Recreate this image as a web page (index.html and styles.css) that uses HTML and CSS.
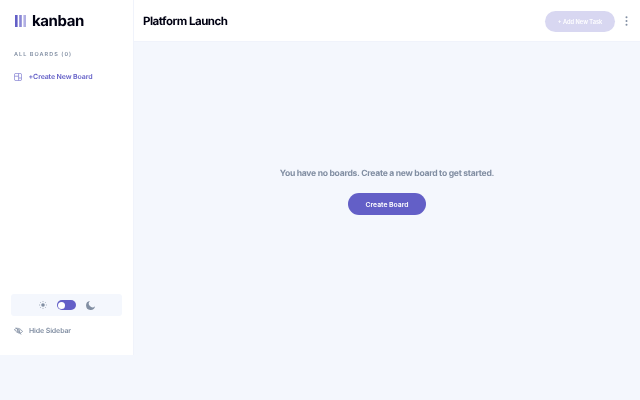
FILE: index.html
```html
<!DOCTYPE html>
<html lang="en">
<head>
<meta charset="utf-8">
<title>Kanban</title>
<link rel="stylesheet" href="styles.css">
</head>
<body>
<div class="app">
  <aside class="sidebar">
    <div class="logo">
      <svg class="logo-mark" width="11" height="12" viewBox="0 0 11 12"><rect x="0" width="2.6" height="12" fill="#635fc7"/><rect x="4.2" width="2.6" height="12" fill="#635fc7" opacity=".75"/><rect x="8.4" width="2.6" height="12" fill="#635fc7" opacity=".5"/></svg>
      <span class="logo-text txt">kanban</span>
    </div>
    <div class="boards-label txt">ALL BOARDS (0)</div>
    <div class="create-link">
      <svg class="nav-icon" width="8" height="8" viewBox="0 0 8 8" fill="none" stroke="#635fc7" stroke-width=".8" opacity=".75"><rect x=".4" y=".4" width="7.2" height="7.2" rx="1.5"/><path d="M.4 3.2H4.6M4.6 .4V7.6M4.6 5H7.6"/></svg>
      <span class="txt">+Create New Board</span>
    </div>
    <div class="sidebar-foot">
      <div class="theme">
        <svg width="8" height="8" viewBox="0 0 9 9" fill="#828fa3"><circle cx="4.5" cy="4.5" r="2"/><path d="M4.5 0V1.2M4.5 7.8V9M0 4.5H1.2M7.8 4.5H9M1.3 1.3L2.2 2.2M6.8 6.8L7.7 7.7M1.3 7.7L2.2 6.8M6.8 2.2L7.7 1.3" stroke="#828fa3" stroke-width=".7"/></svg>
        <div class="toggle"><span class="knob"></span></div>
        <svg width="9" height="9" viewBox="0 0 9 9" fill="#828fa3"><path d="M4 0A4.5 4.5 0 1 0 9 5.2 3.6 3.6 0 0 1 4 0Z"/></svg>
      </div>
      <div class="hide">
        <svg width="9" height="8" viewBox="0 0 9 8" fill="none" stroke="#828fa3" stroke-width=".9"><path d="M.5 2.5C3 .5 6 1 8.5 4.5 6.5 7 3 6.5 .5 2.5Z"/><circle cx="4.5" cy="3.8" r="1.3"/><path d="M2 .5L7 7.5"/></svg>
        <span class="txt">Hide Sidebar</span>
      </div>
    </div>
  </aside>
  <main class="main">
    <header class="topbar">
      <h1 class="title txt">Platform Launch</h1>
      <div class="actions">
        <button class="add-task"><span class="txt">+ Add New Task</span></button>
        <svg width="3" height="10" viewBox="0 0 3 10" fill="#828fa3"><circle cx="1.5" cy="1.2" r="1"/><circle cx="1.5" cy="5" r="1"/><circle cx="1.5" cy="8.8" r="1"/></svg>
      </div>
    </header>
    <section class="empty">
      <p class="empty-text txt">You have no boards. Create a new board to get started.</p>
      <button class="create-board"><span class="txt">Create Board</span></button>
    </section>
  </main>
</div>
</body>
</html>
```
FILE: styles.css
```css
* { box-sizing: border-box; }
html, body { margin: 0; height: 100%; }
body { background: #f4f7fd; font-family: Inter, "Noto Sans", sans-serif; font-weight: 600; overflow: hidden; text-rendering: geometricPrecision; }
.txt { will-change: opacity; }
.app { display: flex; height: 400px; align-items: flex-start; }
.sidebar { width: 134px; height: 355px; background: #fff; border-right: 1px solid #f0f3fb; display: flex; flex-direction: column; flex: none; }
.logo { display: flex; align-items: center; gap: 6px; padding: 8px 0 0 15px; height: 33px; }
.logo-text { font-size: 15px; font-weight: 700; color: #000112; line-height: 24px; letter-spacing: -.4px; }
.boards-label { margin: 17px 0 0 14px; font-size: 5.5px; letter-spacing: 1.05px; line-height: 10px; color: #828fa3; font-weight: 600; }
.create-link { display: flex; align-items: center; gap: 6.5px; margin: 11px 0 0 14px; color: #635fc7; font-size: 7px; line-height: 12px; letter-spacing: -.12px; }
.sidebar-foot { margin-top: auto; padding: 0 11px 19px; }
.theme { height: 22px; background: #f4f7fd; border-radius: 3px; display: flex; align-items: center; justify-content: center; gap: 10px; }
.toggle { width: 19px; height: 10px; border-radius: 5px; background: #635fc7; padding: 1.5px; }
.knob { display: block; width: 7px; height: 7px; border-radius: 50%; background: #fff; }
.hide { display: flex; align-items: center; gap: 6px; margin: 9px 0 0 3px; color: #828fa3; font-size: 7px; font-weight: 600; line-height: 11px; letter-spacing: -.12px; }
.main { flex: 1; min-width: 0; height: 400px; display: flex; flex-direction: column; }
.topbar { height: 42px; background: #fff; border-bottom: 1px solid #f0f3fb; display: flex; align-items: center; justify-content: space-between; padding: 1px 12px 0 9px; }
.title { margin: 0; font-size: 11.5px; font-weight: 700; color: #000112; letter-spacing: -.5px; }
.actions { display: flex; align-items: center; gap: 9px; }
.add-task { width: 70px; height: 21px; border: 0; border-radius: 11px; background: #d8d7f1; color: #fff; font: 600 5.7px Inter, sans-serif; padding: 0; margin-right: 1px; }
.empty { flex: 1; display: flex; flex-direction: column; align-items: center; padding-top: 126px; }
.empty-text { margin: 0; font-size: 8.6px; line-height: 13px; color: #828fa3; font-weight: 700; letter-spacing: -.28px; }
.create-board { margin-top: 12px; width: 78px; height: 22px; border: 0; border-radius: 11px; background: #635fc7; color: #fff; font: 600 6.8px Inter, sans-serif; padding: 0; }
```
